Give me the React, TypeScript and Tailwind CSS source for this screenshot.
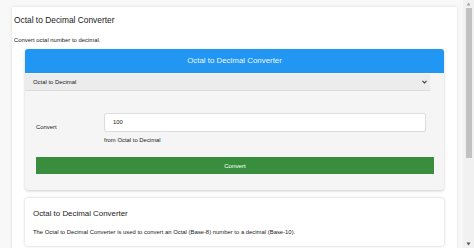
export default function App() {
  return (
    <div className="flex h-[248px] w-[474px] overflow-hidden bg-[#f8f8f8] font-['Liberation_Sans',Arial,sans-serif] text-[#222]">
      <main className="flex-1 pl-[12px] pr-[6px] pt-[7px]">
        <div className="h-[300px] bg-white px-[13px] shadow-[0_0_3px_rgba(0,0,0,0.12)]">
          <h1 className="-mx-[11px] pt-[7px] text-[8.4px] leading-[12px]">Octal to Decimal Converter</h1>
          <p className="-mx-[11px] mt-[10px] text-[5.9px] leading-[8px]">Convert octal number to decimal.</p>

          <section className="mt-[5px] rounded-[3px] bg-[#f5f5f5] pb-[16px] shadow-[0_1px_3px_rgba(0,0,0,0.2)]">
            <div className="flex h-[24px] items-center justify-center rounded-t-[3px] bg-[#2196f3] text-[7.9px] text-[#eef7ff]">
              Octal to Decimal Converter
            </div>
            <div className="mr-[14px] mt-[1px] flex h-[17px] items-center justify-between border-b border-[#dcdcdc] bg-[#ececec] pl-[8px] pr-[3px] text-[5.9px]">
              <span>Octal to Decimal</span>
              <svg width="5" height="4" viewBox="0 0 5 4" className="text-[#333]">
                <path d="M0.5 0.8 L2.5 3 L4.5 0.8" fill="none" stroke="currentColor" strokeWidth="1.1" />
              </svg>
            </div>
            <div className="mt-[22px] flex items-start pl-[11px] pr-[18px]">
              <label className="mt-[10px] w-[68px] text-[5.9px] leading-[8px]">Convert</label>
              <div className="flex-1">
                <div className="flex h-[19px] items-center rounded-[2px] border border-[#dddddd] bg-white pl-[8px] text-[5.9px]">100</div>
                <p className="mt-[4px] text-[5.9px] leading-[8px]">from Octal to Decimal</p>
              </div>
            </div>
            <button className="ml-[11px] mr-[10px] mt-[13px] flex h-[17px] w-[398px] items-center justify-center bg-[#388e3c] text-[6.2px] text-white">
              Convert
            </button>
          </section>

          <section className="mt-[8px] rounded-[3px] bg-white px-[8px] pb-[10px] pt-[10px] shadow-[0_0_3px_rgba(0,0,0,0.22)]">
            <h2 className="text-[7.9px] leading-[12px]">Octal to Decimal Converter</h2>
            <p className="mt-[8px] text-[5.9px] leading-[8px]">
              The Octal to Decimal Converter is used to convert an Octal (Base-8) number to a decimal (Base-10).
            </p>
          </section>
        </div>
      </main>

      <aside className="flex w-[11px] flex-col items-center bg-[#f1f1f1]">
        <svg width="5" height="4" viewBox="0 0 5 4" className="mt-[2px] text-[#a3a3a3]">
          <path d="M2.5 0.5 L4.5 3.5 L0.5 3.5 Z" fill="currentColor" />
        </svg>
        <div className="mt-[2px] h-[150px] w-[6px] bg-[#c1c1c1]" />
        <div className="flex-1" />
        <svg width="5" height="4" viewBox="0 0 5 4" className="mb-[2px] text-[#505050]">
          <path d="M0.5 0.5 L4.5 0.5 L2.5 3.5 Z" fill="currentColor" />
        </svg>
      </aside>
    </div>
  );
}
